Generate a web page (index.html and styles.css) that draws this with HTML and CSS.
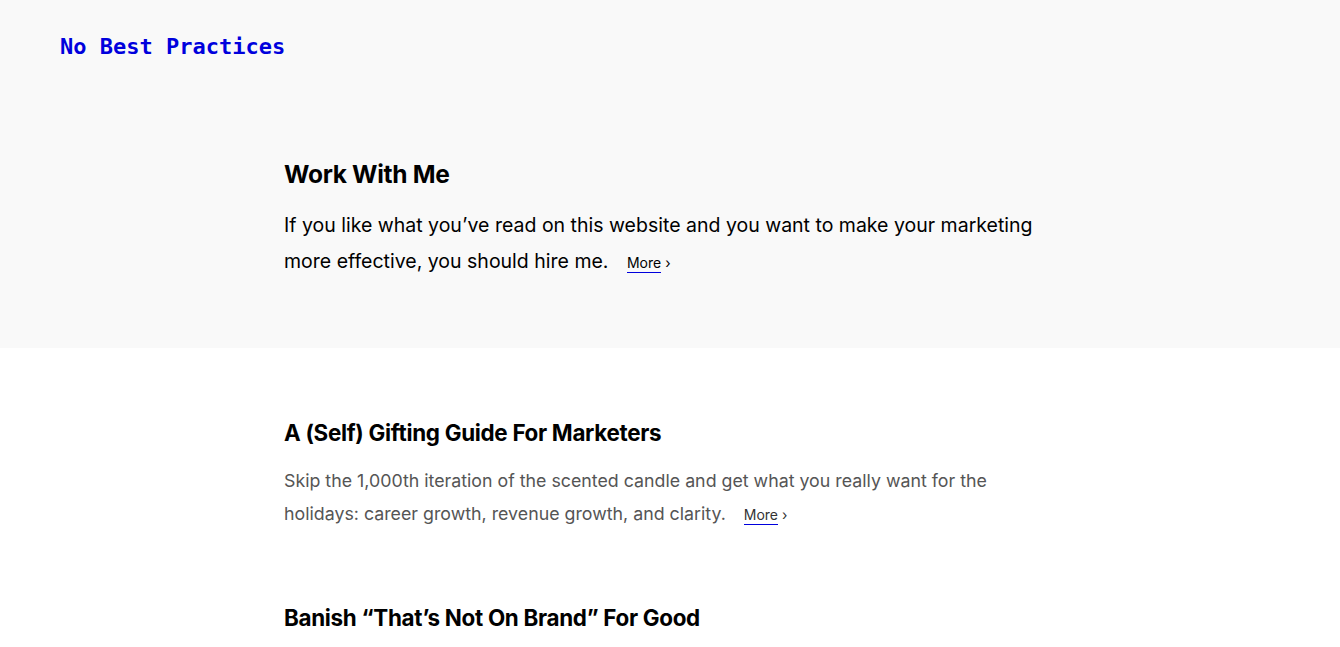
FILE: index.html
```html
<!DOCTYPE html>
<html>
<head>
<meta charset="utf-8">
<link rel="stylesheet" href="styles.css">
</head>
<body>
<section class="hero">
  <header class="site-header">
    <a class="logo" href="#">No Best Practices</a>
  </header>
  <div class="column hero-body">
    <h2 class="hero-title">Work With Me</h2>
    <p class="hero-text">If you like what you’ve read on this website and you want to make your marketing more effective, you should hire me. <span class="more-wrap"><a class="more" href="#">More</a><span class="chev">›</span></span></p>
  </div>
</section>
<main class="posts">
  <article class="column post">
    <h2 class="post-title">A (Self) Gifting Guide For Marketers</h2>
    <p class="post-text">Skip the 1,000th iteration of the scented candle and get what you really want for the holidays: career growth, revenue growth, and clarity. <span class="more-wrap"><a class="more" href="#">More</a><span class="chev">›</span></span></p>
  </article>
  <article class="column post">
    <h2 class="post-title">Banish “That’s Not On Brand” For Good</h2>
  </article>
</main>
</body>
</html>
```
FILE: styles.css
```css
* { box-sizing: border-box; }
body {
  margin: 0;
  font-family: "Inter", "Roboto", sans-serif;
  color: #000;
  background: #fff;
}
.hero {
  background: #f9f9f9;
  padding: 32px 0 69px;
}
.site-header {
  padding: 0 60px;
}
.logo {
  font-family: "DejaVu Sans Mono", "Liberation Mono", monospace;
  font-weight: bold;
  font-size: 22px;
  color: #0000dd;
  text-decoration: none;
  line-height: 30px;
}
.column {
  margin-left: 284px;
  width: 772px;
}
.hero-body {
  margin-top: 96px;
}
.hero-title {
  font-size: 24.5px;
  font-weight: 700;
  margin: 0 0 17px;
  line-height: 32px;
  letter-spacing: -0.3px;
}
.hero-text {
  font-size: 19.5px;
  line-height: 36px;
  margin: 0;
}
.more-wrap {
  display: inline-flex;
  align-items: baseline;
  gap: 4px;
  font-size: 14px;
  line-height: 18px;
  margin-left: 13px;
  white-space: nowrap;
}
.more {
  color: #000;
  text-decoration: none;
  border-bottom: 1px solid #0000dd;
}
.chev {
  color: #000;
}
.posts {
  padding-top: 70px;
}
.post {
  margin-bottom: 73px;
}
.post-title {
  font-size: 22.4px;
  font-weight: 700;
  margin: 0 0 16px;
  line-height: 30px;
  letter-spacing: -0.3px;
}
.post-text {
  font-size: 17.8px;
  line-height: 33px;
  color: #555;
  margin: 0;
}
.post-text .more,
.post-text .chev { color: #333; }
```
